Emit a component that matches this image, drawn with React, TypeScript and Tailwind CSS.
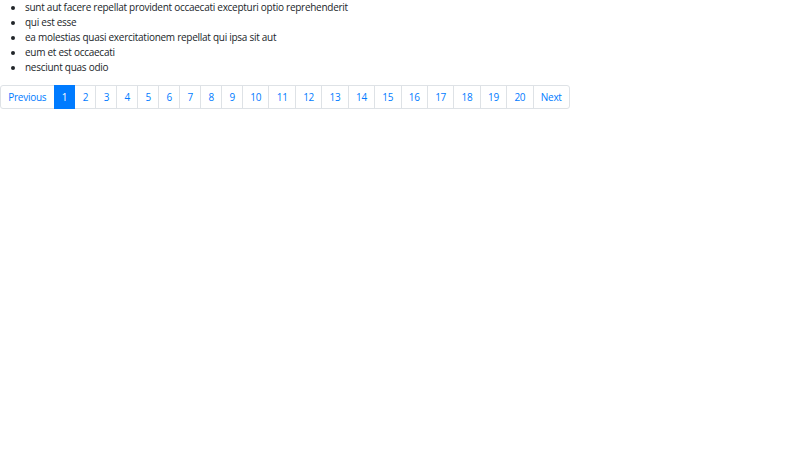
const posts = [
  "sunt aut facere repellat provident occaecati excepturi optio reprehenderit",
  "qui est esse",
  "ea molestias quasi exercitationem repellat qui ipsa sit aut",
  "eum et est occaecati",
  "nesciunt quas odio",
];

const pages = Array.from({ length: 20 }, (_, i) => i + 1);

export default function App() {
  const current = 1;

  return (
    <div className="min-h-[450px] bg-white text-[10px] leading-[15px] tracking-[-0.27px] text-[#212529] font-['Open_Sans',sans-serif]">
      {/* POST TITLES */}
      <ul className="list-disc pl-[25px] mb-[10px]">
        {posts.map((title) => (
          <li key={title}>{title}</li>
        ))}
      </ul>

      {/* PAGINATION */}
      <ul className="flex">
        <li>
          <a className="block h-[24px] px-[7.25px] leading-[22px] border border-[#dee2e6] rounded-l-[3px] text-[#007bff] cursor-pointer">
            Previous
          </a>
        </li>
        {pages.map((n) => (
          <li key={n} className="-ml-px">
            <a
              className={`block h-[24px] px-[7.25px] leading-[22px] border cursor-pointer ${
                n === current
                  ? "bg-[#007bff] border-[#007bff] text-white relative z-10"
                  : "border-[#dee2e6] text-[#007bff]"
              }`}
            >
              {n}
            </a>
          </li>
        ))}
        <li className="-ml-px">
          <a className="block h-[24px] px-[7.25px] leading-[22px] border border-[#dee2e6] rounded-r-[3px] text-[#007bff] cursor-pointer">
            Next
          </a>
        </li>
      </ul>
    </div>
  );
}
